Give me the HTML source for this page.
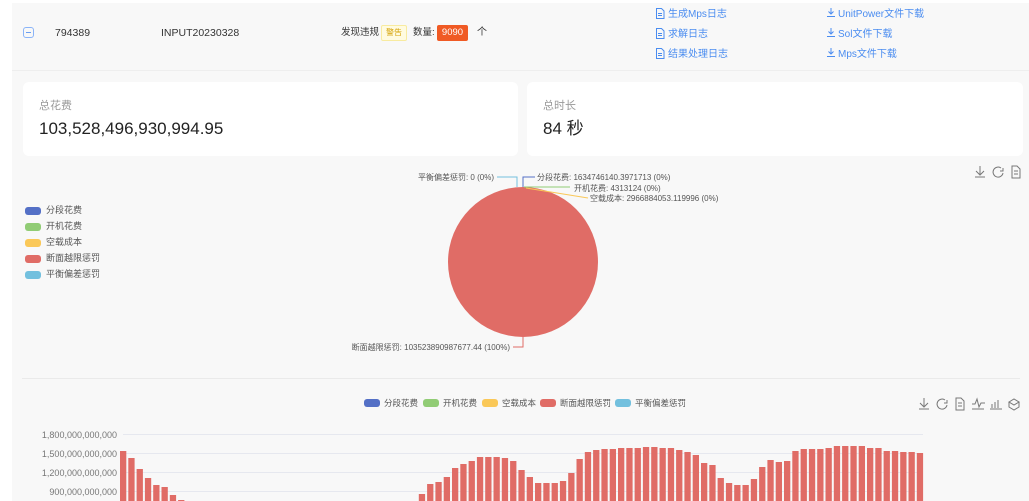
<!DOCTYPE html>
<html><head><meta charset="utf-8"><style>
*{margin:0;padding:0;box-sizing:border-box}
body{width:1029px;height:501px;overflow:hidden;background:#fff;font-family:"Liberation Sans","Noto Sans CJK SC",sans-serif;color:#333;position:relative}
.main{position:absolute;left:12px;top:3px;right:0;bottom:0;background:#f8f8f8}
.abs{position:absolute;white-space:nowrap;line-height:14px}
.card{position:absolute;background:#fff;border-radius:6px;top:82px;height:74px}
.lbl{font-size:11px;color:#999}
.val{font-size:17px;color:#222;line-height:20px}
a{color:#4a8cf0;text-decoration:none;font-size:10px}
.lg{font-size:9px;color:#555}
.sw{display:inline-block;width:16px;height:8px;border-radius:3px;vertical-align:middle;margin-right:5px}
.ic{position:absolute}
</style></head><body>
<div class="main"></div>
<div class="abs" style="left:12px;top:70px;width:1017px;height:1px;background:#eee"></div>
<div class="abs" style="left:23px;top:27px;width:11px;height:11px;border:1px solid #8ab4f8;border-radius:3px"></div>
<div class="abs" style="left:26px;top:32px;width:5px;height:1px;background:#6a9ef0"></div>
<div class="abs" style="left:55px;top:26px;font-size:10.5px">794389</div>
<div class="abs" style="left:161px;top:26px;font-size:10.5px">INPUT20230328</div>
<div class="abs" style="left:341px;top:26px;font-size:9.5px">发现违规</div>
<div class="abs" style="left:381px;top:25px;width:26px;height:16px;background:#fffbe0;border:1px solid #f8eba0;border-radius:2px;font-size:8px;color:#d4a000;text-align:center;line-height:14px">警告</div>
<div class="abs" style="left:413px;top:26px;font-size:9.5px">数量:</div>
<div class="abs" style="left:437px;top:25px;width:31px;height:16px;background:#f05a24;border-radius:2px;font-size:9.5px;color:#fff;text-align:center;line-height:16px">9090</div>
<div class="abs" style="left:477px;top:26px;font-size:10px">个</div>
<div class="abs" style="left:668px;top:6px"><a>生成Mps日志</a></div>
<div class="abs" style="left:668px;top:26px"><a>求解日志</a></div>
<div class="abs" style="left:668px;top:46px"><a>结果处理日志</a></div>
<div class="abs" style="left:838px;top:6px"><a>UnitPower文件下载</a></div>
<div class="abs" style="left:838px;top:26px"><a>Sol文件下载</a></div>
<div class="abs" style="left:838px;top:46px"><a>Mps文件下载</a></div>
<svg class="ic" style="left:0;top:0" width="1029" height="70"><g fill="none" stroke="#4a8cf0" stroke-width="1">
<path d="M656.5 8.5h5l2.5 2.5v7.5h-7.5zM658 13.5h4M658 15.5h4"/>
<path d="M656.5 28.5h5l2.5 2.5v7.5h-7.5zM658 33.5h4M658 35.5h4"/>
<path d="M656.5 48.5h5l2.5 2.5v7.5h-7.5zM658 53.5h4M658 55.5h4"/>
<path d="M831 8v6M828.5 11.5l2.5 2.5 2.5-2.5M827 16.5h8"/>
<path d="M831 28v6M828.5 31.5l2.5 2.5 2.5-2.5M827 36.5h8"/>
<path d="M831 48v6M828.5 51.5l2.5 2.5 2.5-2.5M827 56.5h8"/>
</g></svg>
<div class="card" style="left:23px;width:495px"><div class="abs lbl" style="left:16px;top:17px">总花费</div><div class="abs val" style="left:16px;top:37px">103,528,496,930,994.95</div></div>
<div class="card" style="left:527px;width:496px"><div class="abs lbl" style="left:16px;top:17px">总时长</div><div class="abs val" style="left:16px;top:37px">84 秒</div></div>
<div class="abs lg" style="left:25px;top:203px"><span class="sw" style="background:#5470c6"></span>分段花费</div>
<div class="abs lg" style="left:25px;top:219px"><span class="sw" style="background:#91cc75"></span>开机花费</div>
<div class="abs lg" style="left:25px;top:235px"><span class="sw" style="background:#fac858"></span>空载成本</div>
<div class="abs lg" style="left:25px;top:251px"><span class="sw" style="background:#e06c66"></span>断面越限惩罚</div>
<div class="abs lg" style="left:25px;top:267px"><span class="sw" style="background:#73c0de"></span>平衡偏差惩罚</div>
<svg class="abs" style="left:0;top:0" width="1029" height="501">
<circle cx="523" cy="262" r="75" fill="#e06c66"/>
<polyline points="497,177 517,177 517,187" fill="none" stroke="#73c0de"/>
<polyline points="535,177 523,177 523,187" fill="none" stroke="#5470c6"/>
<polyline points="524,187 570,187" fill="none" stroke="#91cc75"/>
<polyline points="526,188 588,198" fill="none" stroke="#fac858"/>
<polyline points="523,337 523,347 513,347" fill="none" stroke="#e06c66"/>
<g font-size="8" fill="#555" font-family="Liberation Sans,Noto Sans CJK SC,sans-serif">
<text x="494" y="180" text-anchor="end">平衡偏差惩罚: 0 (0%)</text>
<text x="537" y="180">分段花费: 1634746140.3971713 (0%)</text>
<text x="574" y="191">开机花费: 4313124 (0%)</text>
<text x="590" y="201">空载成本: 2966884053.119996 (0%)</text>
<text x="510" y="350" text-anchor="end">断面越限惩罚: 103523890987677.44 (100%)</text>
</g>
<line x1="22" y1="378.5" x2="1020" y2="378.5" stroke="#eaeaea"/>
<g stroke="#e6e8ef"><line x1="123" y1="434.5" x2="923" y2="434.5"/><line x1="123" y1="453.5" x2="923" y2="453.5"/><line x1="123" y1="472.5" x2="923" y2="472.5"/><line x1="123" y1="491.5" x2="923" y2="491.5"/></g>
<g font-size="9" fill="#777" text-anchor="end" font-family="Liberation Sans,sans-serif">
<text x="117" y="438">1,800,000,000,000</text><text x="117" y="457">1,500,000,000,000</text><text x="117" y="476">1,200,000,000,000</text><text x="117" y="495">900,000,000,000</text>
</g>
<g id="bars" fill="#e06c66"></g>
<g fill="none" stroke="#777" stroke-width="1">
<path d="M980 166v8M976 171l4 4 4-4M975 177h10"/>
<path d="M1001 168a5 5 0 1 0 2 5M1003 168v3h-3"/>
<path d="M1012 166h5l3 3v9h-8zM1014 171h4M1014 174h4"/>
<path d="M924 398v8M920 403l4 4 4-4M919 409h10"/>
<path d="M945 400a5 5 0 1 0 2 5M947 400v3h-3"/>
<path d="M956 398h5l3 3v9h-8zM958 403h4M958 406h4"/>
<path d="M972 404h3l2-5 2 8 2-4h4M972 409h12"/>
<path d="M990 409h12M992 408v-4M995 408v-6M998 408v-8"/>
<path d="M1009 402l5-3 5 3-5 3zM1009 402v5l5 3 5-3v-5"/>
</g>
<g>
<rect x="364" y="399" width="16" height="8" rx="3" fill="#5470c6"/>
<rect x="423" y="399" width="16" height="8" rx="3" fill="#91cc75"/>
<rect x="482" y="399" width="16" height="8" rx="3" fill="#fac858"/>
<rect x="540" y="399" width="16" height="8" rx="3" fill="#e06c66"/>
<rect x="615" y="399" width="16" height="8" rx="3" fill="#73c0de"/>
</g>
<g font-size="8.5" fill="#555" font-family="Liberation Sans,Noto Sans CJK SC,sans-serif">
<text x="384" y="406">分段花费</text><text x="443" y="406">开机花费</text><text x="502" y="406">空载成本</text><text x="560" y="406">断面越限惩罚</text><text x="635" y="406">平衡偏差惩罚</text>
</g>
</svg>
<script>
var t=[451,458,469,478,485,487,495,500,501];
for(var i=9;i<36;i++)t.push(510);
t=t.concat([494,484,482,477,468,464,461,457,457,457,458,461,470,477,483,483,483,481,473,459,452,450,449,449,448,448,448,447,447,448,448,450,452,455,463,465,478,483,485,485,479,467,460,462,461,451,449,449,449,448,446,446,446,446,448,448,451,451,452,452,453]);
var s='';for(var i=0;i<t.length;i++){s+='<rect x="'+(120+i*8.3).toFixed(1)+'" y="'+t[i]+'" width="6.3" height="'+(510-t[i])+'"/>';}
document.getElementById('bars').innerHTML=s;
</script>
</body></html>
